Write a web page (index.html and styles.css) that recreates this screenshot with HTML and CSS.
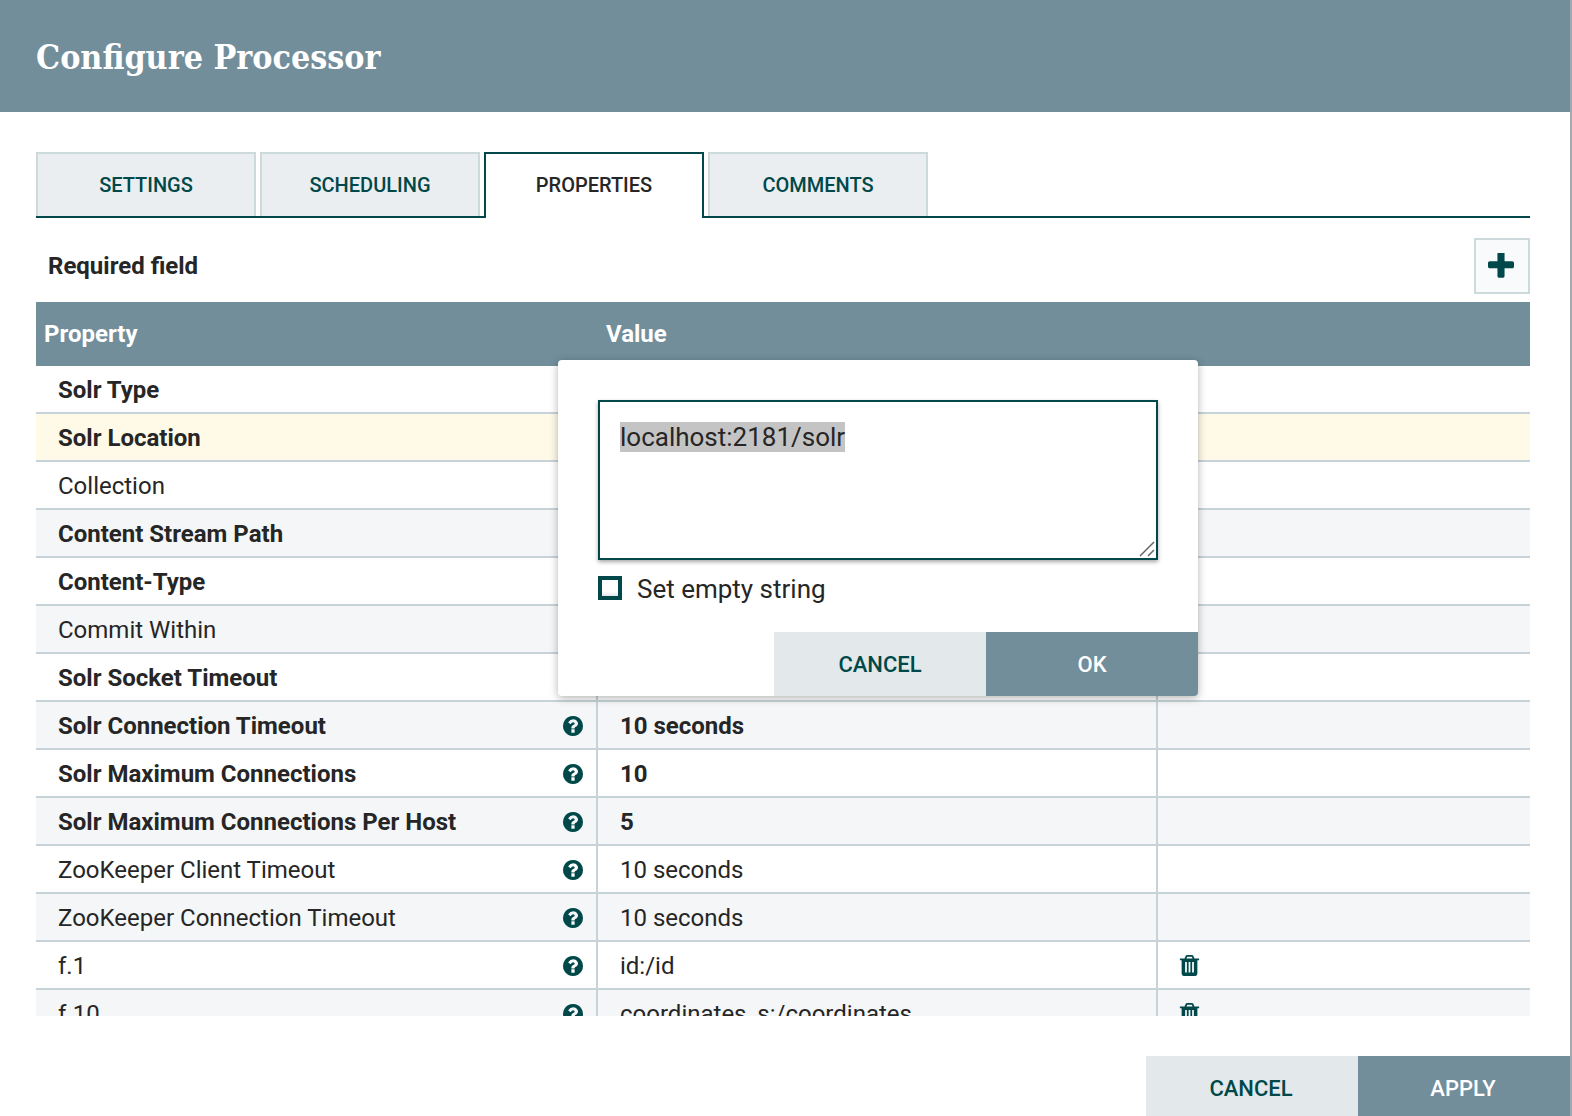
FILE: index.html
```html
<!DOCTYPE html>
<html lang="en">
<head>
<meta charset="utf-8">
<title>Configure Processor</title>
<link rel="stylesheet" href="styles.css">
</head>
<body>
<svg class="defs" aria-hidden="true">
  <symbol id="q" viewBox="128 128 1536 1536"><path d="M1024 1376v-192q0-14-9-23t-23-9h-192q-14 0-23 9t-9 23v192q0 14 9 23t23 9h192q14 0 23-9t9-23zm256-672q0-88-55.5-163t-138.5-116-170-41q-243 0-371 213-15 24 8 42l132 100q7 6 19 6 16 0 25-12 53-68 86-92 34-24 86-24 48 0 85.5 26t37.5 59q0 38-20 61t-68 45q-63 28-115.5 86.5t-52.5 125.5v36q0 14 9 23t23 9h192q14 0 23-9t9-23q0-19 21.5-49.5t54.5-49.5q32-18 49-28.5t46-35 44.5-48 28-60.5 12.5-81zm384 192q0 209-103 385.5t-279.5 279.5-385.5 103-385.5-103-279.5-279.5-103-385.5 103-385.5 279.5-279.5 385.5-103 385.5 103 279.5 279.5 103 385.5z"/></symbol>
  <symbol id="trash" viewBox="128 128 1536 1536"><path d="M704 1376v-704q0-14-9-23t-23-9h-64q-14 0-23 9t-9 23v704q0 14 9 23t23 9h64q14 0 23-9t9-23zm256 0v-704q0-14-9-23t-23-9h-64q-14 0-23 9t-9 23v704q0 14 9 23t23 9h64q14 0 23-9t9-23zm256 0v-704q0-14-9-23t-23-9h-64q-14 0-23 9t-9 23v704q0 14 9 23t23 9h64q14 0 23-9t9-23zm-544-992h448l-48-117q-7-9-17-11h-317q-10 2-17 11zm928 32v64q0 14-9 23t-23 9h-96v948q0 83-47 143.5t-113 60.5h-832q-66 0-113-58.5t-47-141.5v-952h-96q-14 0-23-9t-9-23v-64q0-14 9-23t23-9h309l70-167q15-37 54-63t79-26h320q40 0 79 26t54 63l70 167h309q14 0 23 9t9 23z"/></symbol>
</svg>
<div class="dialog">
  <header class="title-bar"><h1 class="title">Configure Processor</h1></header>
  <main class="content">
    <nav class="tabs">
      <div class="tab">SETTINGS</div>
      <div class="tab">SCHEDULING</div>
      <div class="tab active">PROPERTIES</div>
      <div class="tab">COMMENTS</div>
    </nav>
    <div class="tools">
      <span class="required">Required field</span>
      <button class="add"><svg class="plus" viewBox="192 192 1408 1408"><path d="M1600 736v192q0 40-28 68t-68 28h-416v416q0 40-28 68t-68 28h-192q-40 0-68-28t-28-68v-416h-416q-40 0-68-28t-28-68v-192q0-40 28-68t68-28h416v-416q0-40 28-68t68-28h192q40 0 68 28t28 68v416h416q40 0 68 28t28 68z"/></svg></button>
    </div>
    <div class="thead"><span class="th">Property</span><span class="th">Value</span></div>
    <div class="tbody">
      <div class="row"><div class="cell prop b">Solr Type<svg class="q"><use href="#q"/></svg></div><div class="cell val b"></div><div class="cell act"></div></div>
      <div class="row warn"><div class="cell prop b">Solr Location<svg class="q"><use href="#q"/></svg></div><div class="cell val b"></div><div class="cell act"></div></div>
      <div class="row"><div class="cell prop">Collection<svg class="q"><use href="#q"/></svg></div><div class="cell val"></div><div class="cell act"></div></div>
      <div class="row alt"><div class="cell prop b">Content Stream Path<svg class="q"><use href="#q"/></svg></div><div class="cell val b"></div><div class="cell act"></div></div>
      <div class="row"><div class="cell prop b">Content-Type<svg class="q"><use href="#q"/></svg></div><div class="cell val b"></div><div class="cell act"></div></div>
      <div class="row alt"><div class="cell prop">Commit Within<svg class="q"><use href="#q"/></svg></div><div class="cell val"></div><div class="cell act"></div></div>
      <div class="row"><div class="cell prop b">Solr Socket Timeout<svg class="q"><use href="#q"/></svg></div><div class="cell val b"></div><div class="cell act"></div></div>
      <div class="row alt"><div class="cell prop b">Solr Connection Timeout<svg class="q"><use href="#q"/></svg></div><div class="cell val b">10 seconds</div><div class="cell act"></div></div>
      <div class="row"><div class="cell prop b">Solr Maximum Connections<svg class="q"><use href="#q"/></svg></div><div class="cell val b">10</div><div class="cell act"></div></div>
      <div class="row alt"><div class="cell prop b">Solr Maximum Connections Per Host<svg class="q"><use href="#q"/></svg></div><div class="cell val b">5</div><div class="cell act"></div></div>
      <div class="row"><div class="cell prop">ZooKeeper Client Timeout<svg class="q"><use href="#q"/></svg></div><div class="cell val">10 seconds</div><div class="cell act"></div></div>
      <div class="row alt"><div class="cell prop">ZooKeeper Connection Timeout<svg class="q"><use href="#q"/></svg></div><div class="cell val">10 seconds</div><div class="cell act"></div></div>
      <div class="row"><div class="cell prop">f.1<svg class="q"><use href="#q"/></svg></div><div class="cell val">id:/id</div><div class="cell act"><svg class="trash"><use href="#trash"/></svg></div></div>
      <div class="row alt"><div class="cell prop">f.10<svg class="q"><use href="#q"/></svg></div><div class="cell val">coordinates_s:/coordinates</div><div class="cell act"><svg class="trash"><use href="#trash"/></svg></div></div>
    </div>
  </main>
  <footer class="footer">
    <button class="btn secondary">CANCEL</button>
    <button class="btn primary">APPLY</button>
  </footer>
  <section class="editor">
    <div class="editor-body">
      <div class="textbox">
        <span class="selected">localhost:2181/solr</span>
        <svg class="grip" viewBox="0 0 16 16"><path d="M1 15 15 1M9 15l6-6"/></svg>
      </div>
      <label class="check"><span class="box"></span><span class="check-text">Set empty string</span></label>
    </div>
    <div class="editor-actions">
      <button class="btn secondary">CANCEL</button>
      <button class="btn primary">OK</button>
    </div>
  </section>
</div>
<div class="edge"></div>
</body>
</html>
```
FILE: styles.css
```css
* { box-sizing: border-box; }
html, body { height: 100%; }
body {
  margin: 0;
  display: flex;
  overflow: hidden;
  background: #fff;
  color: #262626;
  font-family: Roboto, "Liberation Sans", sans-serif;
  font-size: 24px;
}
.defs { display: none; }
.dialog {
  position: relative;
  width: 1570px;
  height: 1116px;
  display: flex;
  flex-direction: column;
}
.edge { width: 2px; background: #a0aab0; }
.title-bar {
  height: 112px;
  flex: none;
  display: flex;
  align-items: center;
  padding-left: 36px;
  padding-top: 2px;
  background: #728e9b;
}
.title {
  margin: 0;
  color: #fff;
  font-family: "DejaVu Serif Condensed", "DejaVu Serif", serif;
  font-stretch: condensed;
  font-size: 33.7px;
  font-weight: 700;
}
.content {
  flex: none;
  height: 904px;
  padding: 40px 40px 0 36px;
  display: flex;
  flex-direction: column;
}
.tabs {
  flex: none;
  display: flex;
  gap: 4px;
  height: 66px;
  border-bottom: 2px solid #004849;
}
.tab {
  width: 220px;
  height: 64px;
  display: flex;
  align-items: center;
  justify-content: center;
  background: #eaeef0;
  border: 2px solid #ccdadb;
  border-bottom: none;
  color: #004849;
  font-size: 20px;
  font-weight: 500;
}
.tab.active {
  height: 66px;
  padding-bottom: 2px;
  background: #fff;
  border: 2px solid #004849;
  border-bottom: none;
  color: #262626;
}
.tools {
  flex: none;
  height: 84px;
  display: flex;
  align-items: center;
  justify-content: space-between;
  padding: 20px 0 8px 12px;
}
.required { font-weight: 700; }
.add {
  width: 56px;
  height: 56px;
  padding: 0;
  display: flex;
  align-items: center;
  justify-content: center;
  background: #f9fafb;
  border: 2px solid #ccdadb;
}
.plus { width: 26px; height: 26px; fill: #004849; margin-left: -2px; }
.thead {
  flex: none;
  height: 64px;
  display: grid;
  grid-template-columns: 562px 1fr;
  align-items: center;
  background: #728e9b;
  color: #fff;
  font-weight: 700;
}
.th { padding-left: 8px; }
.tbody { flex: none; height: 650px; overflow: hidden; }
.row {
  height: 48px;
  display: grid;
  grid-template-columns: 562px 560px 1fr;
  border-bottom: 2px solid #c7d3d8;
  background: #fff;
}
.row.alt { background: #f4f6f7; }
.row.warn { background: #fffae8; }
.cell {
  display: flex;
  align-items: center;
  justify-content: space-between;
  border-right: 2px solid #c7d3d8;
  padding-left: 22px;
  padding-top: 2px;
}
.cell.act { border-right: none; }
.cell.b { font-weight: 700; }
.prop { padding-right: 13.5px; }
.q { width: 20px; height: 20px; fill: #004849; flex: none; }
.trash { width: 21px; height: 21px; fill: #004849; flex: none; margin: -2px 0 0 -1px; }
.footer {
  flex: none;
  height: 100px;
  padding-top: 40px;
  display: flex;
  justify-content: flex-end;
}
.btn {
  width: 212px;
  border: none;
  padding: 0;
  font-family: inherit;
  font-size: 22px;
  font-weight: 500;
}
.footer .btn { padding: 4px 2px 0 0; }
.secondary { background: #e3e8eb; color: #004849; }
.primary { background: #728e9b; color: #fff; }
.editor {
  position: absolute;
  left: 558px;
  top: 360px;
  width: 640px;
  height: 336px;
  display: flex;
  flex-direction: column;
  justify-content: space-between;
  background: #fff;
  border-radius: 4px;
  box-shadow: 0 2px 8px rgba(0, 0, 0, .3);
  overflow: hidden;
}
.editor-body { padding: 40px 40px 0; font-size: 26px; }
.textbox {
  position: relative;
  height: 160px;
  padding: 20px 20px 0;
  border: 2px solid #004849;
  box-shadow: 0 2px 4px rgba(0, 0, 0, .35);
}
.selected {
  display: inline-block;
  line-height: 30px;
  background: #c4c4c4;
}
.grip {
  position: absolute;
  right: 1px;
  bottom: 1px;
  width: 16px;
  height: 16px;
  fill: none;
  stroke: #666;
  stroke-width: 1.5;
}
.check {
  display: flex;
  align-items: center;
  gap: 15px;
  margin-top: 16px;
  height: 24px;
}
.check-text { padding-top: 2px; }
.box {
  width: 24px;
  height: 24px;
  border: 4px solid #004849;
  background: linear-gradient(#fff 70%, #e3e8eb);
}
.editor-actions { flex: none; height: 64px; display: flex; justify-content: flex-end; }
```
